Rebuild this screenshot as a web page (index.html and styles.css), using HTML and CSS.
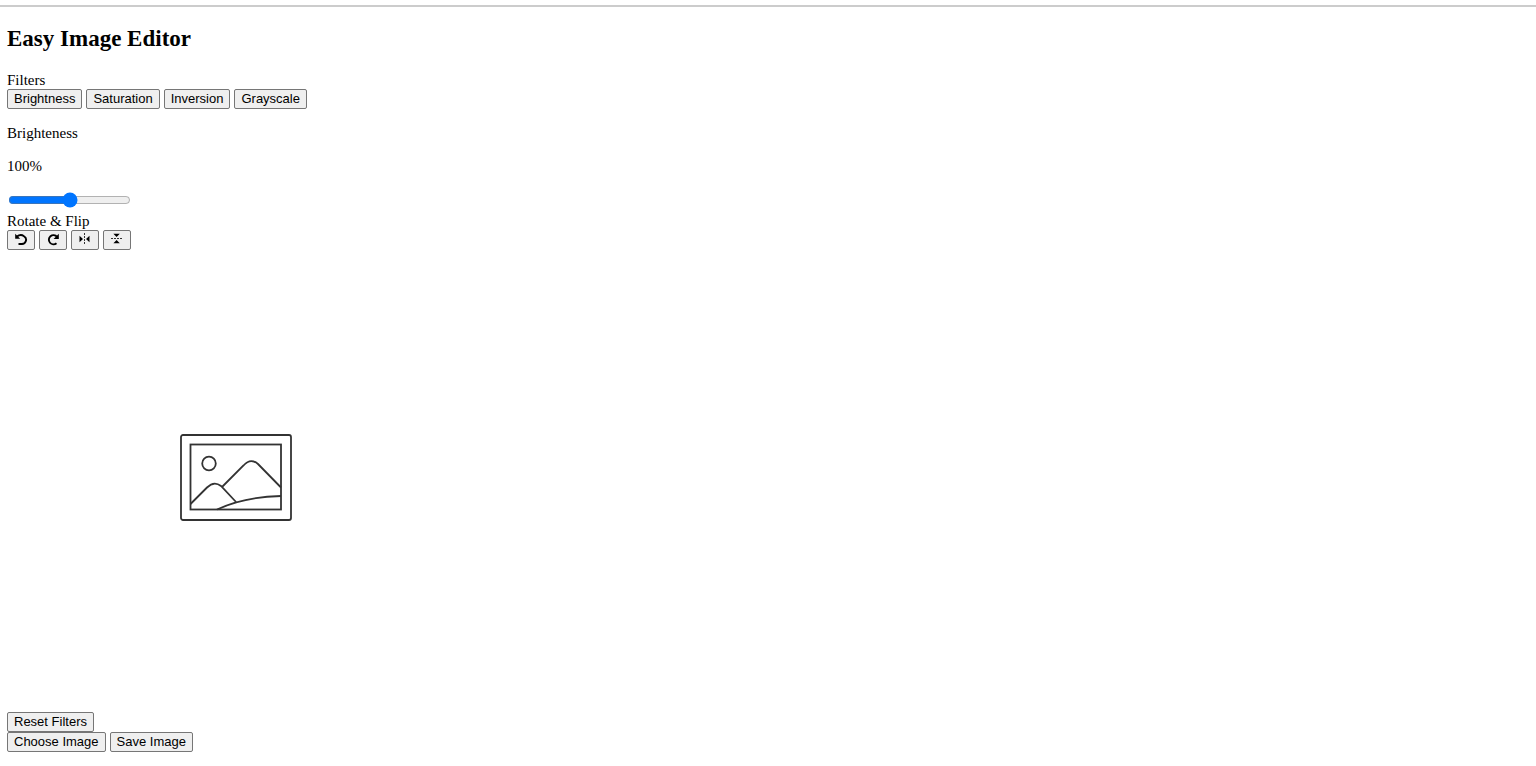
FILE: index.html
```html
<!DOCTYPE html>
<html lang="en">
<head>
<meta charset="utf-8">
<meta name="viewport" content="width=device-width, initial-scale=1">
<title>Easy Image Editor</title>
<link rel="stylesheet" href="styles.css">
</head>
<body>
<main class="editor">
  <h2 class="heading">Easy Image Editor</h2>
  <section class="filters">
    <div class="label">Filters</div>
    <div class="row">
      <button type="button" class="btn">Brightness</button>
      <button type="button" class="btn">Saturation</button>
      <button type="button" class="btn">Inversion</button>
      <button type="button" class="btn">Grayscale</button>
    </div>
    <div class="slider">
      <label class="info" for="amount">Brighteness</label>
      <output class="info" for="amount">100%</output>
      <input class="range" id="amount" type="range" min="0" max="200" value="100">
    </div>
  </section>
  <section class="rotate">
    <div class="label">Rotate &amp; Flip</div>
    <div class="row">
      <button type="button" class="btn icon-btn" aria-label="Rotate left">
        <svg class="icon" viewBox="0 0 14 14"><path d="M3 3.6C5 2 8 1.800 10 3.200A4.200 4.200 0 0 1 7.600 11H4.500" fill="none" stroke="#000" stroke-width="1.9"/><path d="M1.200.8v5h5z"/></svg>
      </button>
      <button type="button" class="btn icon-btn" aria-label="Rotate right">
        <svg class="icon" viewBox="0 0 14 14"><path d="M11 3.800A4.600 4.600 0 1 0 10.500 10.200" fill="none" stroke="#000" stroke-width="1.9"/><path d="M12.800.8v5.200H7.600z"/></svg>
      </button>
      <button type="button" class="btn icon-btn" aria-label="Flip horizontal">
        <svg class="icon" viewBox="0 0 14 14"><path d="M1.500 2.800v6.400L5 6zM11.500 2.800v6.400L8 6z"/><path d="M6.500 0v12" fill="none" stroke="#000" stroke-width=".8" stroke-dasharray="2 1"/></svg>
      </button>
      <button type="button" class="btn icon-btn" aria-label="Flip vertical">
        <svg class="icon" viewBox="0 0 14 14"><path d="M3.400.8h6.400L6.600 4zM3.400 10.200h6.400L6.600 7z"/><path d="M1 5.500h11" fill="none" stroke="#000" stroke-width=".8" stroke-dasharray="2 1"/></svg>
      </button>
    </div>
  </section>
  <div class="preview">
    <svg class="placeholder" viewBox="0 0 112 87" role="img" aria-label="Image placeholder">
      <g fill="none" stroke="#333" stroke-width="1.8">
        <rect x="1" y="1" width="110" height="85" rx="2"/>
        <rect x="10.5" y="10.5" width="90.5" height="65"/>
        <circle cx="29" cy="29.5" r="6.8"/>
        <path d="M10.5 70 27 53.5Q34 46.5 41 52L56.5 68.5M41.5 53.500 63.500 31.500Q70.500 23.500 78 30L101 53.500M37 75.500C55 67 79 62.500 101 62"/>
      </g>
    </svg>
  </div>
  <div class="controls">
    <div class="row"><button type="button" class="btn reset">Reset Filters</button></div>
    <div class="row">
      <button type="button" class="btn">Choose Image</button>
      <button type="button" class="btn">Save Image</button>
    </div>
  </div>
</main>
</body>
</html>
```
FILE: styles.css
```css
body {
  margin: 5px 0 0;
  border-top: 2px solid #ccc;
  background: #fff;
  color: #000;
  font: 15px/18px "Liberation Serif", "Times New Roman", serif;
}
.editor { padding: 18px 7px 0; }
.heading {
  margin: 0 0 19px;
  font-size: 23px;
  line-height: 27px;
}
.row { display: flex; gap: 4px; }
.btn {
  box-sizing: border-box;
  height: 20px;
  padding: 0 6px;
  border: 1px solid #767676;
  border-radius: 2px;
  background: #efefef;
  color: #000;
  font: 13px/18px "Liberation Sans", Arial, sans-serif;
}
.slider {
  display: flex;
  flex-direction: column;
  align-items: flex-start;
  gap: 15px;
  padding-top: 15px;
}
.range {
  width: 123px;
  height: 16px;
  margin: 2px 1px 4px;
  accent-color: #0075ff;
}
.icon-btn {
  display: flex;
  align-items: center;
  justify-content: center;
  width: 28px;
}
.icon { flex: none; width: 14px; height: 14px; }
.preview {
  display: flex;
  align-items: center;
  justify-content: center;
  max-width: 458px;
  height: 454px;
  margin-bottom: 8px;
}
.placeholder { width: 112px; height: 87px; }
```
